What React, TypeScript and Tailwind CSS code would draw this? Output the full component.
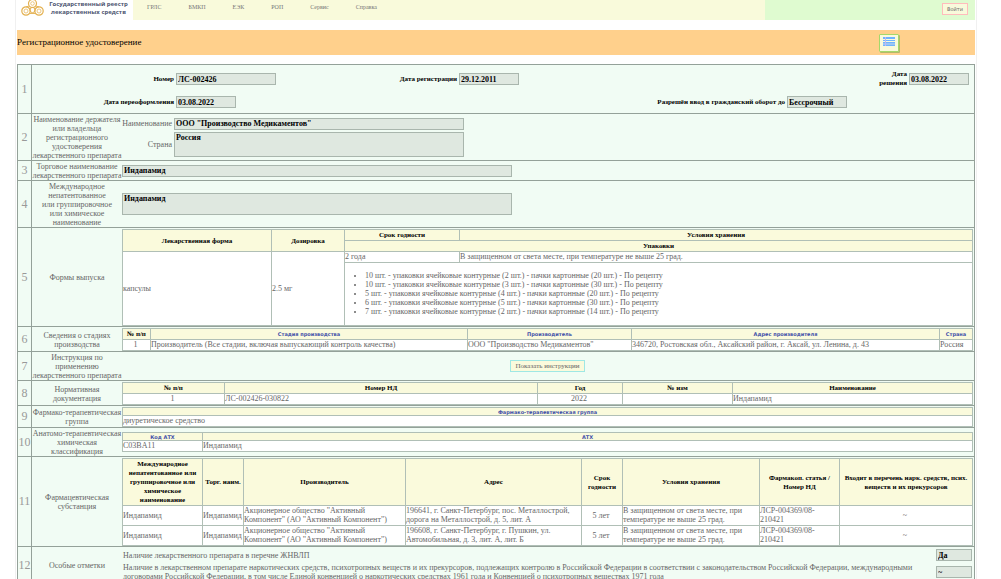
import React from 'react';

const menu = ['ГРЛС', 'БМКП', 'ЕЭК', 'РОП', 'Сервис', 'Справка'];

const packs = [
  '10 шт. - упаковки ячейковые контурные (2 шт.) - пачки картонные (20 шт.) - По рецепту',
  '10 шт. - упаковки ячейковые контурные (3 шт.) - пачки картонные (30 шт.) - По рецепту',
  '5 шт. - упаковки ячейковые контурные (4 шт.) - пачки картонные (20 шт.) - По рецепту',
  '6 шт. - упаковки ячейковые контурные (5 шт.) - пачки картонные (30 шт.) - По рецепту',
  '7 шт. - упаковки ячейковые контурные (2 шт.) - пачки картонные (14 шт.) - По рецепту',
];

const substances = [
  '196641, г. Санкт-Петербург, пос. Металлострой, дорога на Металлострой, д. 5, лит. А',
  '196608, г. Санкт-Петербург, г. Пушкин, ул. Автомобильная, д. 3, лит. А, лит. Б',
];

const field = 'block h-3 border border-[#a9b6ad] bg-[#dfe8e0] px-px text-[8px] leading-[9px] font-bold text-black outline-none';
const area = 'block resize-none overflow-hidden border border-[#a9b6ad] bg-[#dfe8e0] px-px text-[8px] leading-[9px] font-bold text-black outline-none';
const strong = 'text-right text-[7px] leading-[9px] font-bold text-black';

type SectionProps = {
  num: number;
  title: string;
  children: React.ReactNode;
};

const Section: React.FC<SectionProps> = ({ num, title, children }) => (
  <section className="flex border-b border-[#94a199]">
    <Num>{num}</Num>
    <h2 className="flex w-[90px] shrink-0 items-center justify-center pt-px text-center whitespace-pre">{title}</h2>
    <div className="flex min-w-0 flex-1 flex-col justify-center pr-px">{children}</div>
  </section>
);

const Num: React.FC<{ children: React.ReactNode }> = ({ children }) => (
  <div className="flex w-[14px] shrink-0 items-center justify-center border-r border-[#94a199] pb-px text-[12px] leading-[12px] text-[#999999]">
    {children}
  </div>
);

const Table: React.FC<{ children: React.ReactNode }> = ({ children }) => (
  <table className="w-full table-fixed border-collapse bg-white">{children}</table>
);

type CellProps = React.ThHTMLAttributes<HTMLTableCellElement>;

const Th: React.FC<CellProps> = ({ children, ...rest }) => (
  <th className="border border-[#b0bfb6] bg-[#fafadc] px-px pt-px text-center align-middle text-[7px] leading-[9px] font-bold text-black" {...rest}>
    {children}
  </th>
);

// Small blue heading used by the reference directories
const ThBlue: React.FC<CellProps & { tall?: boolean }> = ({ children, tall, ...rest }) => (
  <th
    className={`border border-[#b0bfb6] bg-[#fafadc] px-px pt-px text-center align-middle font-['DejaVu_Sans'] text-[5px] font-bold text-[#3f4fa8] ${tall ? 'leading-[9px]' : 'leading-[6px]'}`}
    {...rest}
  >
    {children}
  </th>
);

const Td: React.FC<CellProps & { center?: boolean }> = ({ children, center, ...rest }) => (
  <td className={`border border-[#b0bfb6] pr-[2px] pb-px align-middle ${center ? 'text-center' : 'text-left'}`} {...rest}>
    {children}
  </td>
);

const Logo = () => (
  <svg width="23" height="17" viewBox="0 0 23 17" fill="none" stroke="#e3b04f" aria-hidden="true">
    <circle cx="11.5" cy="3.5" r="4" strokeWidth="1.2" />
    <circle cx="11.5" cy="3.5" r="1.8" strokeWidth="0.7" />
    <circle cx="5" cy="11" r="4.2" strokeWidth="1.2" />
    <circle cx="5" cy="11" r="2" strokeWidth="0.7" />
    <circle cx="18" cy="11" r="4.2" strokeWidth="1.2" />
    <circle cx="18" cy="11" r="2" strokeWidth="0.7" />
    <circle cx="11.5" cy="10" r="2.6" strokeWidth="1" />
    <path d="M8 6 5 7M15 6l3 1M8.5 13.5h6" strokeWidth="0.9" />
  </svg>
);

const ListIcon = () => (
  <svg width="12" height="10" viewBox="0 0 12 10" aria-hidden="true">
    <path fill="#6fb4ff" d="M0 0h12v2H0zM0 3h12v1H0zM0 5h12v1H0zM0 8h12v1H0z" />
    <path fill="#9cc6f5" d="M0 6h12v2H0z" />
    <path fill="#c3b8ee" d="M2 0h1v9H2z" />
  </svg>
);

export default function App() {
  return (
    <div className="h-screen overflow-hidden bg-white font-['Liberation_Serif',serif] text-[8px] leading-[9px] text-[#666666]">
      <div className="mr-6 ml-[15px] min-h-full border-x border-[#f0f0f0] px-px">
        <header className="flex h-5">
          <a href="#" className="flex w-[116px] shrink-0 pl-1 font-['Open_Sans'] text-[6px] leading-[8px] font-bold text-[#4c5470]">
            <Logo />
            <span className="flex-1 text-center whitespace-nowrap">
              Государственный реестр
              <br />
              лекарственных средств
            </span>
          </a>
          <nav className="flex flex-1 gap-[27px] bg-[#f9fadb] pt-[3px] pl-[14px] text-[6px] text-[#777777]">
            {menu.map((item) => (
              <a key={item} href="#">{item}</a>
            ))}
          </nav>
          <div className="flex w-[210px] shrink-0 justify-end bg-[#dffbd0] pt-[3px] pr-[7px]">
            <button className="h-3 w-[26px] border border-[#ffbcbc] bg-[#f9fadb] font-['DejaVu_Sans'] text-[5px] leading-[9px] text-[#666666]">
              Войти
            </button>
          </div>
        </header>

        <div className="mt-[10px] flex h-[25px] items-center justify-between bg-[#ffd08c] pr-[76px]">
          <h1 className="text-[9px] text-black">Регистрационное удостоверение</h1>
          <button aria-label="Список" className="flex h-[18px] w-5 justify-center rounded-[1px] border border-[#a5d86a] bg-[#f9fadb] pt-[2px] shadow-[1px_1px_0_#b5b86a]">
            <ListIcon />
          </button>
        </div>

        <main className="mt-[9px] border-x border-t border-[#94a199] bg-[#f1fcf4]">
          <section className="flex border-b border-[#94a199]">
            <Num>1</Num>
            <div className="flex flex-1 flex-col gap-2 py-[5px]">
              <div className="grid grid-cols-[142px_100px_179px_60px_1fr_60px] items-center gap-[2px] pr-[5px]">
                <label htmlFor="num" className={strong}>Номер</label>
                <input id="num" readOnly defaultValue="ЛС-002426" className={`${field} w-full`} />
                <label htmlFor="reg" className={strong}>Дата регистрации</label>
                <input id="reg" readOnly defaultValue="29.12.2011" className={`${field} w-full`} />
                <label htmlFor="dec" className={strong}>Дата<br />решения</label>
                <input id="dec" readOnly defaultValue="03.08.2022" className={`${field} w-full`} />
              </div>
              <div className="grid grid-cols-[142px_60px_1fr_187px] items-center gap-[2px]">
                <label htmlFor="renew" className={strong}>Дата переоформления</label>
                <input id="renew" readOnly defaultValue="03.08.2022" className={`${field} w-full`} />
                <label htmlFor="until" className={strong}>Разрешён ввод в гражданский оборот до</label>
                <input id="until" readOnly defaultValue="Бессрочный" className={`${field} w-[60px]`} />
              </div>
            </div>
          </section>

          <Section num={2} title={'Наименование держателя\nили владельца\nрегистрационного\nудостоверения\nлекарственного препарата'}>
            <div className="grid grid-cols-[50px_290px] items-center gap-[2px]">
              <label htmlFor="holder" className="text-right">Наименование</label>
              <input id="holder" readOnly defaultValue={'ООО "Производство Медикаментов"'} className={`${field} w-full`} />
              <label htmlFor="country" className="text-right">Страна</label>
              <textarea id="country" readOnly defaultValue="Россия" className={`${area} h-[25px] w-full`} />
            </div>
          </Section>

          <Section num={3} title={'Торговое наименование\nлекарственного препарата'}>
            <input aria-label="Торговое наименование" readOnly defaultValue="Индапамид" className={`${field} w-[390px]`} />
          </Section>

          <Section num={4} title={'Международное\nнепатентованное\nили группировочное\nили химическое\nнаименование'}>
            <textarea aria-label="Международное наименование" readOnly defaultValue="Индапамид" className={`${area} h-[22px] w-[390px]`} />
          </Section>

          <Section num={5} title="Формы выпуска">
            <div className="pt-px">
              <Table>
                <colgroup>
                  <col className="w-[149px]" />
                  <col className="w-[73px]" />
                  <col className="w-[115px]" />
                  <col />
                </colgroup>
                <thead>
                  <tr>
                    <Th rowSpan={2}>Лекарственная форма</Th>
                    <Th rowSpan={2}>Дозировка</Th>
                    <Th>Срок годности</Th>
                    <Th>Условия хранения</Th>
                  </tr>
                  <tr>
                    <Th colSpan={2}>Упаковки</Th>
                  </tr>
                </thead>
                <tbody>
                  <tr>
                    <Td rowSpan={2}>капсулы</Td>
                    <Td rowSpan={2}>2.5 мг</Td>
                    <Td>2 года</Td>
                    <Td>В защищенном от света месте, при температуре не выше 25 град.</Td>
                  </tr>
                  <tr>
                    <Td colSpan={2}>
                      <ul className="my-2 list-disc pl-5">
                        {packs.map((pack) => (
                          <li key={pack}>{pack}</li>
                        ))}
                      </ul>
                    </Td>
                  </tr>
                </tbody>
              </Table>
            </div>
          </Section>

          <Section num={6} title={'Сведения о стадиях\nпроизводства'}>
            <div className="pt-px">
              <Table>
                <colgroup>
                  <col className="w-7" />
                  <col />
                  <col className="w-[164px]" />
                  <col className="w-[308px]" />
                  <col className="w-[33px]" />
                </colgroup>
                <thead>
                  <tr>
                    <Th>№ п/п</Th>
                    <ThBlue tall>Стадия производства</ThBlue>
                    <ThBlue tall>Производитель</ThBlue>
                    <ThBlue tall>Адрес производителя</ThBlue>
                    <ThBlue tall>Страна</ThBlue>
                  </tr>
                </thead>
                <tbody>
                  <tr>
                    <Td center>1</Td>
                    <Td>Производитель (Все стадии, включая выпускающий контроль качества)</Td>
                    <Td>ООО "Производство Медикаментов"</Td>
                    <Td>346720, Ростовская обл., Аксайский район, г. Аксай, ул. Ленина, д. 43</Td>
                    <Td>Россия</Td>
                  </tr>
                </tbody>
              </Table>
            </div>
          </Section>

          <Section num={7} title={'Инструкция по\nприменению\nлекарственного препарата'}>
            <button className="mx-auto h-3 w-[75px] border border-[#9fe8e4] bg-[#fafadc] text-[7px] leading-[9px]">
              Показать инструкции
            </button>
          </Section>

          <Section num={8} title={'Нормативная\nдокументация'}>
            <div className="pt-px">
              <Table>
                <colgroup>
                  <col className="w-[102px]" />
                  <col />
                  <col className="w-[85px]" />
                  <col className="w-[110px]" />
                  <col className="w-[240px]" />
                </colgroup>
                <thead>
                  <tr>
                    <Th>№ п/п</Th>
                    <Th>Номер НД</Th>
                    <Th>Год</Th>
                    <Th>№ изм</Th>
                    <Th>Наименование</Th>
                  </tr>
                </thead>
                <tbody>
                  <tr>
                    <Td center>1</Td>
                    <Td>ЛС-002426-030822</Td>
                    <Td center>2022</Td>
                    <Td />
                    <Td>Индапамид</Td>
                  </tr>
                </tbody>
              </Table>
            </div>
          </Section>

          <Section num={9} title={'Фармако-терапевтическая\nгруппа'}>
            <div className="pt-px">
              <Table>
                <thead>
                  <tr>
                    <ThBlue>Фармако-терапевтическая группа</ThBlue>
                  </tr>
                </thead>
                <tbody>
                  <tr>
                    <Td>диуретическое средство</Td>
                  </tr>
                </tbody>
              </Table>
            </div>
          </Section>

          <Section num={10} title={'Анатомо-терапевтическая\nхимическая\nклассификация'}>
            <Table>
              <colgroup>
                <col className="w-20" />
                <col />
              </colgroup>
              <thead>
                <tr>
                  <ThBlue>Код АТХ</ThBlue>
                  <ThBlue>АТХ</ThBlue>
                </tr>
              </thead>
              <tbody>
                <tr>
                  <Td>C03BA11</Td>
                  <Td>Индапамид</Td>
                </tr>
              </tbody>
            </Table>
          </Section>

          <Section num={11} title={'Фармацевтическая\nсубстанция'}>
            <div className="pt-px">
              <Table>
                <colgroup>
                  <col className="w-20" />
                  <col className="w-[41px]" />
                  <col className="w-[162px]" />
                  <col />
                  <col className="w-[41px]" />
                  <col className="w-[137px]" />
                  <col className="w-20" />
                  <col className="w-[133px]" />
                </colgroup>
                <thead>
                  <tr>
                    <Th>Международное непатентованное или группировочное или химическое наименование</Th>
                    <Th>Торг. наим.</Th>
                    <Th>Производитель</Th>
                    <Th>Адрес</Th>
                    <Th>Срок годности</Th>
                    <Th>Условия хранения</Th>
                    <Th>Фармакоп. статья / Номер НД</Th>
                    <Th>Входит в перечень нарк. средств, псих. веществ и их прекурсоров</Th>
                  </tr>
                </thead>
                <tbody>
                  {substances.map((address) => (
                    <tr key={address}>
                      <Td>Индапамид</Td>
                      <Td>Индапамид</Td>
                      <Td>Акционерное общество "Активный Компонент" (АО "Активный Компонент")</Td>
                      <Td>{address}</Td>
                      <Td center>5 лет</Td>
                      <Td>В защищенном от света месте, при температуре не выше 25 град.</Td>
                      <Td>ЛСР-004369/08-210421</Td>
                      <Td center>~</Td>
                    </tr>
                  ))}
                </tbody>
              </Table>
            </div>
          </Section>

          <Section num={12} title="Особые отметки">
            <div className="grid grid-cols-[1fr_36px] items-center gap-x-[20px] gap-y-[2px] py-[2px] pr-px pl-px">
              <label htmlFor="vital">Наличие лекарственного препарата в перечне ЖНВЛП</label>
              <input id="vital" readOnly defaultValue="Да" className={`${field} w-full`} />
              <label htmlFor="narc">
                Наличие в лекарственном препарате наркотических средств, психотропных веществ и их прекурсоров, подлежащих контролю в Российской Федерации в соответствии с законодательством Российской Федерации, международными договорами Российской Федерации, в том числе Единой конвенцией о наркотических средствах 1961 года и Конвенцией о психотропных веществах 1971 года
              </label>
              <input id="narc" readOnly defaultValue="~" className={`${field} w-full`} />
            </div>
          </Section>
        </main>
      </div>
    </div>
  );
}
